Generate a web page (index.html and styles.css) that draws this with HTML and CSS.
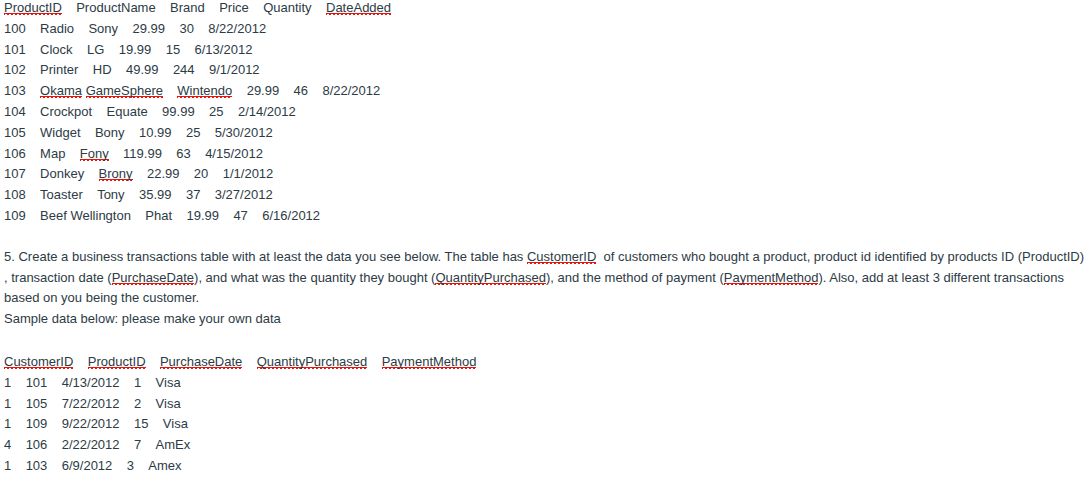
FILE: index.html
```html
<!DOCTYPE html>
<html lang="en">
<head>
    <meta charset="UTF-8">
    <meta name="viewport" content="width=device-width, initial-scale=1.0">
    <title>Assignment - Products and Transactions</title>
    <link rel="stylesheet" href="styles.css">
</head>
<body>
    <div class="page">
        <!-- Products table -->
        <div class="data-table">
            <div class="row"><span><span class="typo">ProductID</span></span><span>ProductName</span><span>Brand</span><span>Price</span><span>Quantity</span><span><span class="typo">DateAdded</span></span></div>
            <div class="row"><span>100</span><span>Radio</span><span>Sony</span><span>29.99</span><span>30</span><span>8/22/2012</span></div>
            <div class="row"><span>101</span><span>Clock</span><span>LG</span><span>19.99</span><span>15</span><span>6/13/2012</span></div>
            <div class="row"><span>102</span><span>Printer</span><span>HD</span><span>49.99</span><span>244</span><span>9/1/2012</span></div>
            <div class="row"><span>103</span><span><span class="typo">Okama</span> <span class="typo">GameSphere</span></span><span><span class="typo">Wintendo</span></span><span>29.99</span><span>46</span><span>8/22/2012</span></div>
            <div class="row"><span>104</span><span>Crockpot</span><span>Equate</span><span>99.99</span><span>25</span><span>2/14/2012</span></div>
            <div class="row"><span>105</span><span>Widget</span><span>Bony</span><span>10.99</span><span>25</span><span>5/30/2012</span></div>
            <div class="row"><span>106</span><span>Map</span><span><span class="typo">Fony</span></span><span>119.99</span><span>63</span><span>4/15/2012</span></div>
            <div class="row"><span>107</span><span>Donkey</span><span><span class="typo">Brony</span></span><span>22.99</span><span>20</span><span>1/1/2012</span></div>
            <div class="row"><span>108</span><span>Toaster</span><span>Tony</span><span>35.99</span><span>37</span><span>3/27/2012</span></div>
            <div class="row"><span>109</span><span>Beef Wellington</span><span>Phat</span><span>19.99</span><span>47</span><span>6/16/2012</span></div>
        </div>

        <p class="question">
            5. Create a business transactions table with at least the data you see below. The table has <span class="typo">CustomerID</span>&nbsp; of customers who bought a product, product id identified by products ID (ProductID)<br>
            , transaction date (<span class="typo">PurchaseDate</span>), and what was the quantity they bought (<span class="typo">QuantityPurchased</span>), and the method of payment (<span class="typo">PaymentMethod</span>). Also, add at least 3 different transactions<br>
            based on you being the customer.<br>
            Sample data below: please make your own data
        </p>

        <!-- Transactions table -->
        <div class="data-table">
            <div class="row"><span><span class="typo">CustomerID</span></span><span><span class="typo">ProductID</span></span><span><span class="typo">PurchaseDate</span></span><span><span class="typo">QuantityPurchased</span></span><span><span class="typo">PaymentMethod</span></span></div>
            <div class="row"><span>1</span><span>101</span><span>4/13/2012</span><span>1</span><span>Visa</span></div>
            <div class="row"><span>1</span><span>105</span><span>7/22/2012</span><span>2</span><span>Visa</span></div>
            <div class="row"><span>1</span><span>109</span><span>9/22/2012</span><span>15</span><span>Visa</span></div>
            <div class="row"><span>4</span><span>106</span><span>2/22/2012</span><span>7</span><span>AmEx</span></div>
            <div class="row"><span>1</span><span>103</span><span>6/9/2012</span><span>3</span><span>Amex</span></div>
        </div>
    </div>
</body>
</html>
```

FILE: styles.css
```css
body {
    margin: 0;
    background-color: #ffffff;
    font-family: "Liberation Sans", Arial, sans-serif;
    font-size: 13px;
    line-height: 1.6;
    color: #2d3b45;
}
.page {
    margin-top: -2px;
    padding: 0 4px;
}
.data-table {
    margin-bottom: 20px;
}
.row {
    display: flex;
    gap: 14.4px; /* four spaces between columns */
    white-space: nowrap;
}
.question {
    margin: 0 0 22px 0;
    white-space: nowrap;
}
/* spell-check squiggle, drawn as a thin zigzag at the bottom of the word */
.typo {
    background-image:
        linear-gradient(45deg, transparent 60%, #e8150f 60%, #e8150f 85%, transparent 85%),
        linear-gradient(135deg, transparent 15%, #e8150f 15%, #e8150f 40%, transparent 40%);
    background-size: 4px 2px;
    background-repeat: repeat-x;
    background-position: 0 100%;
}
```
